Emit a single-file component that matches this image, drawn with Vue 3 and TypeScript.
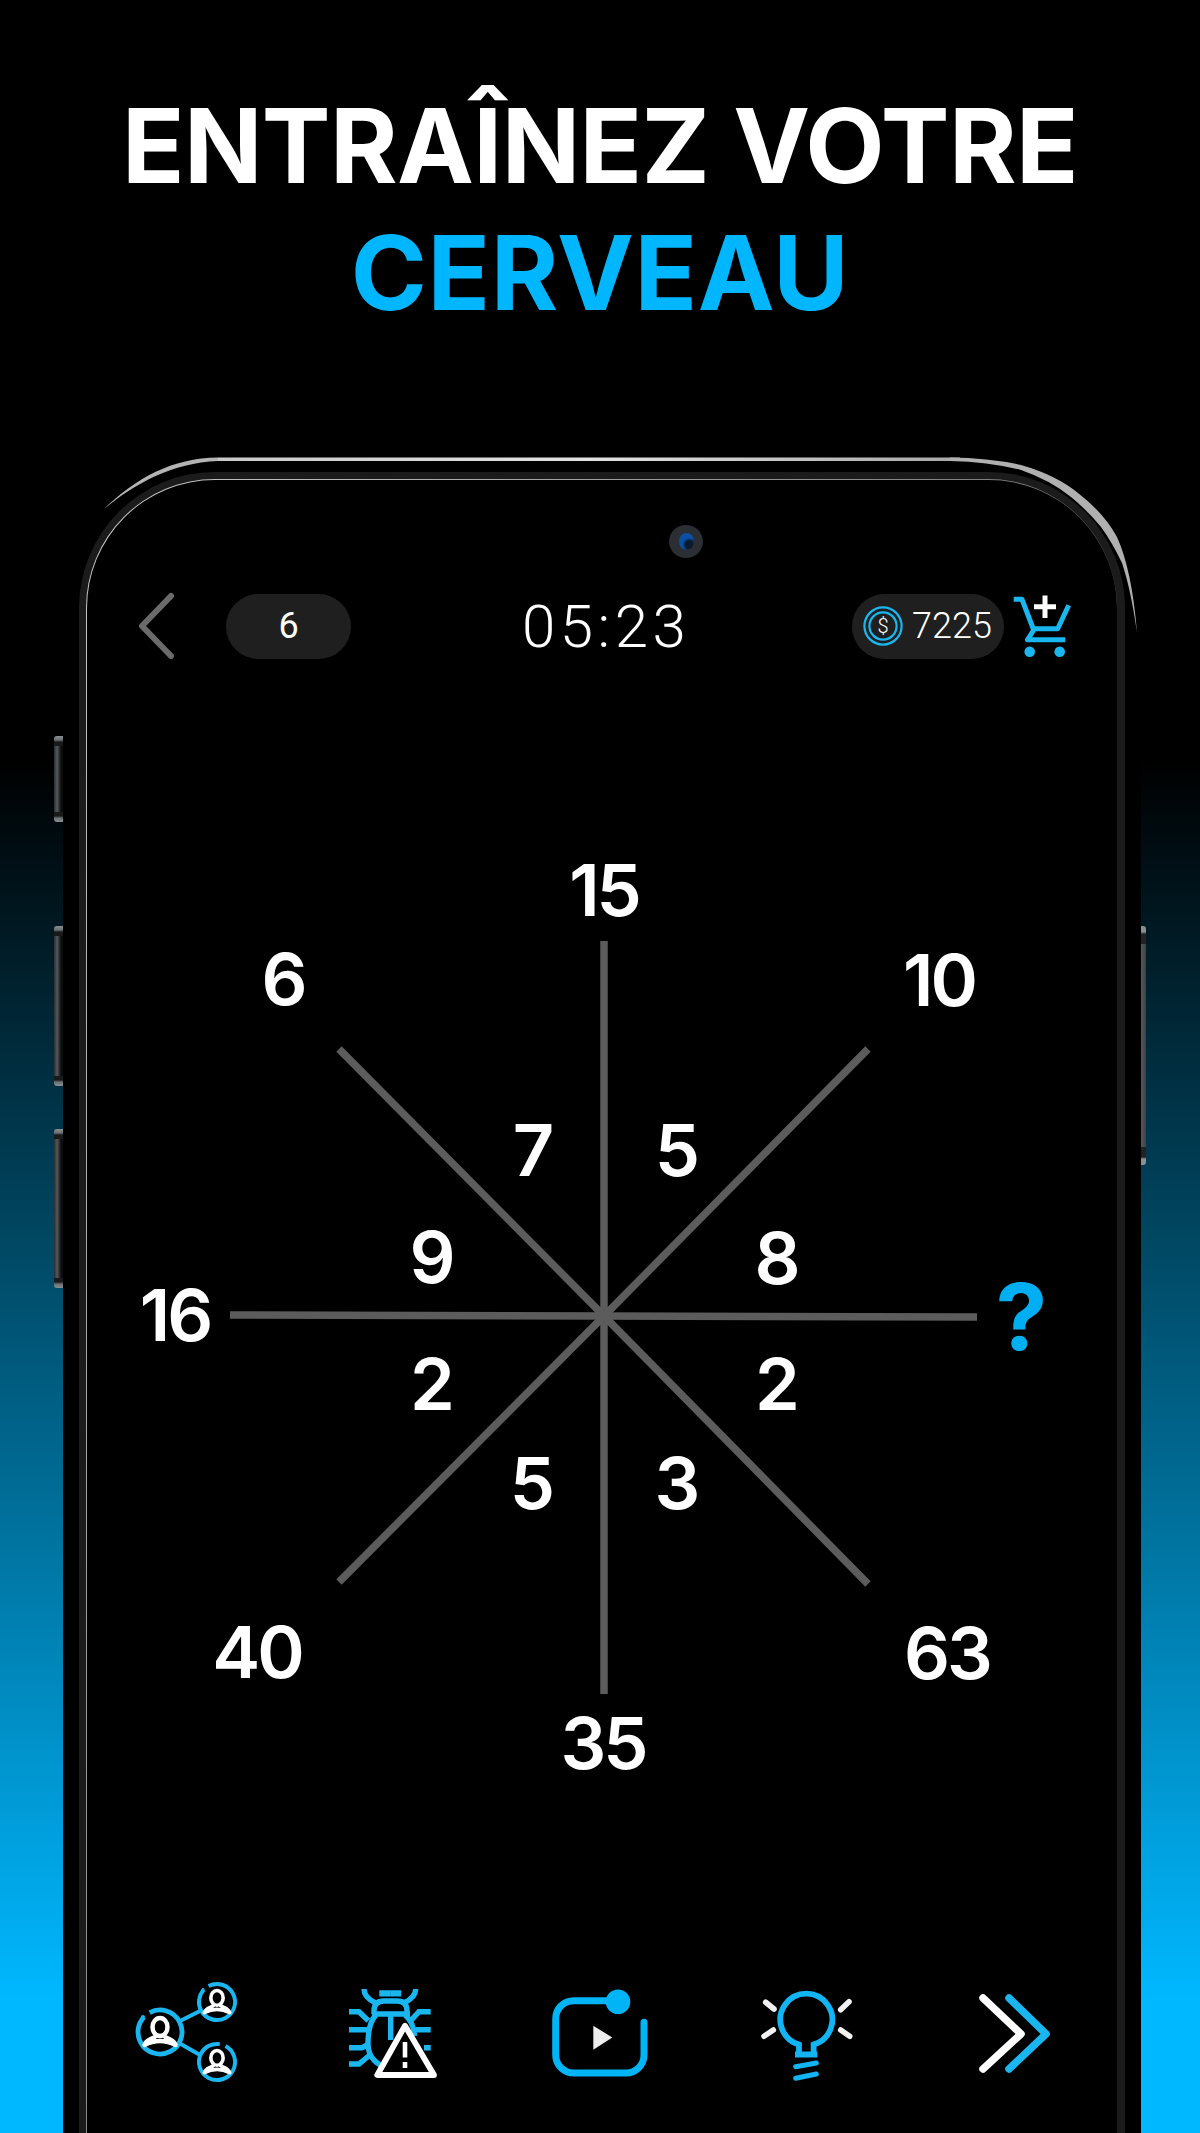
<script setup lang="ts">
// Puzzle screen inside a phone mock-up. Number positions are measured from the
// centre of each label in page pixels, then shifted into the board's own box.
const BOARD_X = 87
const BOARD_Y = 860

const labels = [
  { t: '15', x: 604, y: 891 },
  { t: '6', x: 283, y: 980 },
  { t: '10', x: 939, y: 981 },
  { t: '7', x: 532, y: 1151 },
  { t: '5', x: 676, y: 1151 },
  { t: '9', x: 431, y: 1258 },
  { t: '8', x: 776, y: 1259 },
  { t: '16', x: 175, y: 1316 },
  { t: '2', x: 431, y: 1385 },
  { t: '2', x: 776, y: 1385 },
  { t: '5', x: 531, y: 1484 },
  { t: '3', x: 676, y: 1484 },
  { t: '40', x: 257, y: 1653 },
  { t: '63', x: 947, y: 1654 },
  { t: '35', x: 603, y: 1744 }
].map(l => ({ t: l.t, left: `${l.x - BOARD_X}px`, top: `${l.y - BOARD_Y}px` }))

// Spokes, all through the hub at (604, 1317).
const spokes = [
  [604, 942],
  [604, 1695],
  [230, 1316],
  [977, 1318],
  [339, 1050],
  [868, 1050],
  [339, 1583],
  [868, 1585]
].map(([x, y]) => ({ x: x - BOARD_X, y: y - BOARD_Y }))

const hub = { x: 604 - BOARD_X, y: 1317 - BOARD_Y }

// Share icon: one big avatar linked to two small ones.
const people = [
  { cx: 26, cy: 53, s: 1, rot: -118, dot: [-17, -15] },
  { cx: 83, cy: 23, s: 0.82, rot: -118, dot: [-17, -15] },
  { cx: 83, cy: 83, s: 0.82, rot: -62, dot: [17, -15] }
]
</script>

<template>
  <div class="page">
    <h1 class="title">
      <span>ENTRAÎNEZ VOTRE</span>
      <span class="accent">CERVEAU</span>
    </h1>

    <div class="phone">
      <i class="btn btn-l1" />
      <i class="btn btn-l2" />
      <i class="btn btn-l3" />
      <i class="btn btn-r" />

      <div class="band">
        <div class="line">
          <div class="screen">
            <span class="camera"><span class="lens" /></span>

            <div class="topbar">
              <svg class="back" width="40" height="68" viewBox="0 0 40 68" aria-hidden="true">
                <path d="M35 4 L6 34 L35 64" fill="none" stroke="#6a6a6a" stroke-width="6" stroke-linecap="round" stroke-linejoin="round" />
              </svg>
              <div class="pill level">6</div>
              <div class="clock">05:23</div>
              <div class="pill coins">
                <svg width="40" height="42" viewBox="0 0 40 42" aria-hidden="true">
                  <circle cx="20" cy="21" r="18.6" fill="none" stroke="#1ab6f0" stroke-width="2.2" />
                  <circle cx="20" cy="21" r="13.6" fill="none" stroke="#1ab6f0" stroke-width="2.2" />
                  <text x="20" y="28" class="coin-sign" text-anchor="middle">$</text>
                </svg>
                <span>7225</span>
              </div>
              <svg class="cart" width="62" height="64" viewBox="0 0 62 64" aria-hidden="true">
                <path d="M2.7 5.3 H11 L22.7 36 L16.5 45.8 H54.3 M22.7 34.7 H46.7 L57.7 11.3" fill="none" stroke="#1ab6f0" stroke-width="5" stroke-linejoin="round" />
                <circle cx="18.7" cy="57.7" r="5.3" fill="#1ab6f0" />
                <circle cx="48.7" cy="57.7" r="5.3" fill="#1ab6f0" />
                <path d="M34 1.5 V24 M23 12.7 H45" stroke="#fff" stroke-width="5" />
              </svg>
            </div>

            <div class="board">
              <svg class="spokes" width="1030" height="920" aria-hidden="true">
                <line
                  v-for="(s, i) in spokes"
                  :key="i"
                  :x1="hub.x"
                  :y1="hub.y"
                  :x2="s.x"
                  :y2="s.y"
                  stroke="#5c5c5c"
                  stroke-width="7.5"
                />
              </svg>
              <span v-for="(l, i) in labels" :key="i" class="num" :style="{ left: l.left, top: l.top }">{{ l.t }}</span>
              <span class="num ask">?</span>
            </div>

            <div class="tools">
              <svg class="share" width="100" height="105" viewBox="0 0 100 105" aria-hidden="true">
                <path d="M46 42 L66 32 M45 64 L66 76" stroke="#1ab6f0" stroke-width="4" />
                <g v-for="p in people" :key="p.cy" :transform="`translate(${p.cx} ${p.cy}) scale(${p.s})`">
                  <circle r="22" fill="none" stroke="#1ab6f0" stroke-width="4.8" stroke-dasharray="130 8.2" :transform="`rotate(${p.rot})`" />
                  <circle :cx="p.dot[0]" :cy="p.dot[1]" r="2" fill="#1ab6f0" />
                  <ellipse cy="-5" rx="7.5" ry="9" fill="none" stroke="#fff" stroke-width="4.4" />
                  <path d="M-15.5 13 C-14 7 -7 7 -4 4 M15.5 13 C14 7 7 7 4 4 M-15.5 13 Q0 5 15.5 13" fill="none" stroke="#fff" stroke-width="4.4" stroke-linecap="round" />
                </g>
              </svg>

              <svg width="95" height="105" viewBox="0 -5 95 105" aria-hidden="true">
                <g fill="none" stroke="#1ab6f0" stroke-width="5.4">
                  <path d="M20 5 C20 11 25 16 31.7 19 M71.7 5 C71.7 11 66 16 60 19" />
                  <path d="M38 12.5 V9 H43.5 V12.5 M49 12.5 V9 H54.5 V12.5" />
                  <path d="M30 30 V27 Q30 17 40 17 H53 Q63 17 63 27 V30" />
                  <path d="M28 30 H66" />
                  <path d="M46.7 30 V56" />
                  <path d="M32 31 C25 38 24 50 24 60 C24 74 34 82 45 84 M61 31 C67 36 70 44 70.5 52" />
                  <path d="M5 27.7 H15 L24.3 36.7 M5 45.7 H23 M5 63.7 H18 L24 60.5 M5 80 H15 L27 70" />
                  <path d="M86.7 27.7 H75 L66.7 36.7 M86.7 45.7 H72 M86.7 63.7 H80" />
                </g>
                <path d="M61 41.7 L33.3 91 H90 Z" fill="#000" stroke="#fff" stroke-width="5.8" stroke-linejoin="round" />
                <path d="M61 58 V73.5 M61 78 V84" stroke="#fff" stroke-width="4.6" />
              </svg>

              <svg width="100" height="105" viewBox="0 -5 100 105" aria-hidden="true">
                <path d="M69 16.7 H25 A18 18 0 0 0 6.7 34.7 V71 A18 18 0 0 0 24.7 89 H77 A18 18 0 0 0 95 71 V38.3" fill="none" stroke="#00b4f5" stroke-width="7" stroke-linecap="round" />
                <circle cx="69" cy="17.7" r="12.3" fill="#00b4f5" />
                <path d="M44.3 41.7 L63.3 53.5 L44.3 65.7 Z" fill="#eee" />
              </svg>

              <svg width="95" height="105" viewBox="0 -5 95 105" aria-hidden="true">
                <path d="M40 70 V60.6 A26 26 0 1 1 54.6 60.6 V70 M36 70.5 H58.3" fill="none" stroke="#12b4f3" stroke-width="5.8" />
                <path d="M36.7 82.7 L57.3 79 M36.7 94.3 L57.3 90" stroke="#12b4f3" stroke-width="5" stroke-linecap="round" />
                <path d="M6.7 18.3 L15 25 M90 17.7 L81.7 25.7 M5 52.3 L14.3 46 M90.7 52.3 L81.7 46" stroke="#f2f2f2" stroke-width="5.6" stroke-linecap="round" />
              </svg>

              <svg class="next" width="85" height="105" viewBox="0 -10 85 105" aria-hidden="true">
                <path d="M9 9 L47 45 L9 80" fill="none" stroke="#fff" stroke-width="7.5" stroke-linecap="round" stroke-linejoin="round" />
                <path d="M35 9 L72 45 L35 80" fill="none" stroke="#1ab6f0" stroke-width="7.5" stroke-linecap="round" stroke-linejoin="round" />
              </svg>
            </div>
          </div>
        </div>
      </div>

      <!-- Light catching the rim of the body. -->
      <svg class="rim" viewBox="63 457 1078 200" aria-hidden="true">
        <defs>
          <linearGradient id="rimTop" x1="0" x2="1" y1="0" y2="0">
            <stop offset="0" stop-color="#c9c9c9" />
            <stop offset="0.5" stop-color="#e2e2e2" />
            <stop offset="1" stop-color="#a8a8a8" />
          </linearGradient>
        </defs>
        <path d="M218 457.5 H960 V461 H218 Z" fill="url(#rimTop)" />
        <path d="M218 457.5 C172 458 136 478 104 509 C136 483 172 463 218 461 Z" fill="#b4b4b4" />
        <path d="M950 457.5 Q990 458 1021 465 Q1056 475 1078 493 Q1104 513 1117 537 Q1132 570 1137 633 Q1131 590 1122 563 Q1112 542 1101 527 Q1088 511 1071 497 Q1050 480 1021 470 Q990 462 950 461 Z" fill="#b0b0b0" />
      </svg>
    </div>
  </div>
</template>

<style>
html,
body {
  background: #000;
}
</style>

<style scoped>
.page {
  width: 1200px;
  height: 2133px;
  overflow: hidden;
  background: linear-gradient(to bottom, #000 760px, #00b8ff 2000px);
  font-family: Roboto, 'Liberation Sans', sans-serif;
  color: #fff;
}
.title {
  display: flex;
  flex-direction: column;
  align-items: center;
  height: 457px;
  box-sizing: border-box;
  margin: 0;
  padding-top: 82px;
  font-family: Inter, 'Liberation Sans', sans-serif;
  font-size: 103px;
  font-weight: 700;
  line-height: 127px;
  letter-spacing: -0.6px;
}
.accent {
  color: #00b6ff;
  letter-spacing: 0.6px;
}
.phone {
  position: relative;
  margin: 0 59px 0 63px;
  padding: 15px 16px 0;
  height: 1676px;
  box-sizing: border-box;
  background: #000;
  border-radius: 152px 152px 0 0;
}
.btn {
  position: absolute;
  width: 9px;
  left: -9px;
  box-sizing: border-box;
  border-radius: 3px 0 0 3px;
  background: linear-gradient(to bottom, #8a8f92 0, #6a6f72 4px, #1a1a1a 6px, #1a1a1a 10px, transparent 10px),
    linear-gradient(to top, #8a8f92 0, #6a6f72 4px, #1a1a1a 6px, #1a1a1a 10px, transparent 10px),
    linear-gradient(to right, #2a2d2f 0, #55595c 35%, #2a2d2f 60%, #0c0c0c 80%);
}
.btn-l1 {
  top: 279px;
  height: 86px;
}
.btn-l2 {
  top: 469px;
  height: 160px;
}
.btn-l3 {
  top: 672px;
  height: 159px;
}
.btn-r {
  left: auto;
  right: -5px;
  width: 5px;
  top: 469px;
  height: 239px;
  border-radius: 0 3px 3px 0;
  background: linear-gradient(to bottom, #8a8f92 0, #8a8f92 6px, #222 8px, #222 18px, transparent 18px),
    linear-gradient(to top, #8a8f92 0, #8a8f92 6px, #222 8px, #222 18px, transparent 18px),
    linear-gradient(to right, #55595c, #3d4144);
}
.rim {
  position: absolute;
  left: 0;
  top: 0;
  width: 1078px;
  height: 200px;
}
.band {
  padding: 7px 8px 0 7px;
  height: 100%;
  box-sizing: border-box;
  background: #1b1b1b;
  border-radius: 136px 136px 0 0;
}
.line {
  padding: 1px 0 0 1px;
  height: 100%;
  box-sizing: border-box;
  background: linear-gradient(115deg, #c8c8c8 0%, #808080 50%, #3a3a3a 100%);
  border-radius: 129px 129px 0 0;
}
.screen {
  position: relative;
  height: 100%;
  padding-top: 112px;
  box-sizing: border-box;
  background: #000;
  border-radius: 128px 128px 0 0;
}
.camera {
  position: absolute;
  left: 582px;
  top: 45px;
  width: 34px;
  height: 33px;
  display: flex;
  align-items: center;
  justify-content: center;
  border-radius: 50%;
  background: #2b2e33;
}
.lens {
  width: 15px;
  height: 17px;
  border-radius: 50%;
  background: radial-gradient(circle at 70% 70%, #0b1a2c 0 25%, #0a50a8 45%);
}
.topbar {
  display: flex;
  align-items: center;
  height: 68px;
  padding: 0 44px 0 49px;
}
.back {
  flex: none;
}
.pill {
  height: 65px;
  box-sizing: border-box;
  display: flex;
  align-items: center;
  background: #1f1f20;
  border-radius: 33px;
  font-size: 36px;
}
.level {
  width: 125px;
  margin-left: 50px;
  justify-content: center;
}
.clock {
  margin-left: 171px;
  font-size: 60px;
  font-weight: 300;
  letter-spacing: 4.5px;
}
.coins {
  margin-left: auto;
  width: 152px;
  padding-left: 11px;
  gap: 9px;
  font-weight: 300;
}
.coin-sign {
  fill: #fff;
  font-size: 20px;
  font-family: Roboto, 'Liberation Sans', sans-serif;
}
.cart {
  margin-left: 7px;
  flex: none;
}
.board {
  position: relative;
  height: 920px;
  margin-top: 199px;
}
.spokes {
  position: absolute;
  left: 0;
  top: 0;
}
.num {
  position: absolute;
  transform: translate(-50%, -50%);
  font-family: Inter, 'Liberation Sans', sans-serif;
  font-size: 72px;
  font-weight: 600;
  line-height: 1;
  letter-spacing: -3px;
}
.ask {
  left: 933px;
  top: 458px;
  color: #00aef2;
  font-size: 92px;
  font-weight: 700;
}
.tools {
  display: flex;
  gap: 110px;
  margin-top: 200px;
  padding-left: 47px;
}
.share {
  overflow: visible;
}
.next {
  margin-left: 10px;
}
</style>
